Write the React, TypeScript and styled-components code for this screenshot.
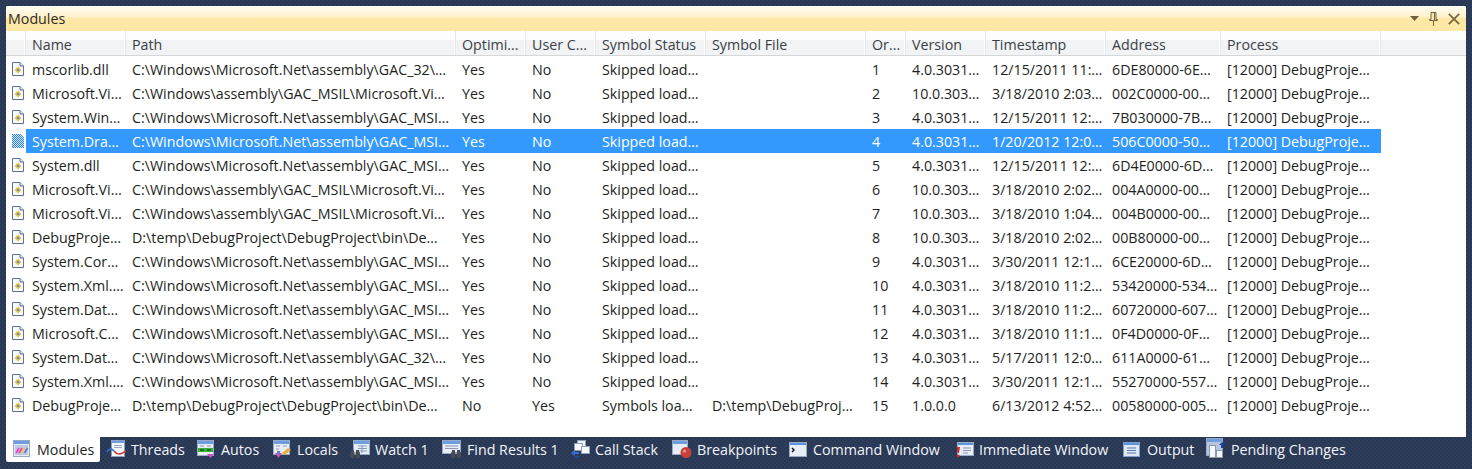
import React from "react";
import styled, { createGlobalStyle } from "styled-components";

const GlobalStyle = createGlobalStyle`
  html, body {
    margin: 0;
    height: 100%;
    overflow: hidden;
  }
  body {
    background-color: #293955;
    background-image: repeating-conic-gradient(#2d3d5a 0 25%, #283753 0 50%);
    background-size: 4px 4px;
    font-family: "Open Sans", "Noto Sans", sans-serif;
    font-size: 14.25px;
  }
`;

const COLUMNS = "20px 100px 330px 70px 70px 110px 160px 40px 80px 120px 115px 160px";

const headers = ["Name", "Path", "Optimi...", "User C...", "Symbol Status", "Symbol File", "Or...", "Version", "Timestamp", "Address", "Process"];

const WIN_NET = "C:\\Windows\\Microsoft.Net\\assembly\\";
const MSIL = WIN_NET + "GAC_MSI…";
const G32 = WIN_NET + "GAC_32\\…";
const VS = "C:\\Windows\\assembly\\GAC_MSIL\\Microsoft.Vi…";
const PROJ = "D:\\temp\\DebugProject\\DebugProject\\bin\\De…";

const rows = [
  ["mscorlib.dll", G32, "4.0.3031…", "12/15/2011 11:…", "6DE80000-6E…"],
  ["Microsoft.Vi…", VS, "10.0.303…", "3/18/2010 2:03…", "002C0000-00…"],
  ["System.Win…", MSIL, "4.0.3031…", "12/15/2011 12:…", "7B030000-7B…"],
  ["System.Dra…", MSIL, "4.0.3031…", "1/20/2012 12:0…", "506C0000-50…"],
  ["System.dll", MSIL, "4.0.3031…", "12/15/2011 12:…", "6D4E0000-6D…"],
  ["Microsoft.Vi…", VS, "10.0.303…", "3/18/2010 2:02…", "004A0000-00…"],
  ["Microsoft.Vi…", VS, "10.0.303…", "3/18/2010 1:04…", "004B0000-00…"],
  ["DebugProje…", PROJ, "10.0.303…", "3/18/2010 2:02…", "00B80000-00…"],
  ["System.Cor…", MSIL, "4.0.3031…", "3/30/2011 12:1…", "6CE20000-6D…"],
  ["System.Xml.…", MSIL, "4.0.3031…", "3/18/2010 11:2…", "53420000-534…"],
  ["System.Dat…", MSIL, "4.0.3031…", "3/18/2010 11:2…", "60720000-607…"],
  ["Microsoft.C…", MSIL, "4.0.3031…", "3/18/2010 11:1…", "0F4D0000-0F…"],
  ["System.Dat…", G32, "4.0.3031…", "5/17/2011 12:0…", "611A0000-61…"],
  ["System.Xml.…", MSIL, "4.0.3031…", "3/30/2011 12:1…", "55270000-557…"],
  ["DebugProje…", PROJ, "1.0.0.0", "6/13/2012 4:52…", "00580000-005…"],
];

const WindowBase = ({ x = 0, y = 0, w = 17, h = 15 }: { x?: number; y?: number; w?: number; h?: number }) => (
  <>
    <rect x={x + 0.5} y={y + 0.5} width={w - 1} height={h - 1} fill="#e6edf7" stroke="#98aac6" />
    <rect x={x + 1} y={y + 1} width={w - 2} height={3} fill="#6f9ee0" />
  </>
);

const Binoculars = ({ x, y }: { x: number; y: number }) => (
  <g transform={`translate(${x} ${y})`} fill="#454c58">
    <rect x="1" y="0" width="3" height="3" />
    <rect x="6" y="0" width="3" height="3" />
    <rect x="0" y="2" width="4.5" height="6" rx="1" />
    <rect x="5.5" y="2" width="4.5" height="6" rx="1" />
    <rect x="4" y="2" width="2" height="2" fill="#9aa1ac" />
  </g>
);

const tabIcons: Record<string, React.ReactNode> = {
  Modules: (
    <>
      <WindowBase h={17} />
      <rect x="2" y="5" width="13" height="10" fill="#bccbe2" />
      <path d="M3 13l3-5M6 13l3-5" stroke="#e64fc0" strokeWidth="2" />
      <path d="M8.5 13l3-5" stroke="#f2c83c" strokeWidth="2" />
      <path d="M11.5 13l3-5" stroke="#6a7ce6" strokeWidth="2" />
    </>
  ),
  Threads: (
    <>
      <rect x="4.5" y="0.5" width="13" height="16" fill="#f3f6fb" stroke="#8fa1bc" />
      <rect x="5" y="1" width="12" height="2" fill="#6f9ee0" />
      <path d="M7 5.5h8M7 7.5h8" stroke="#9aaac2" />
      <path d="M0 12c3-5 5-3 7-1" fill="none" stroke="#2f6fd0" strokeWidth="1.6" />
      <path d="M7 11c3 4 6 4 12 0" fill="none" stroke="#cf3a3a" strokeWidth="1.6" />
    </>
  ),
  Autos: (
    <>
      <WindowBase h={16} />
      <path d="M3 6h4M10 6h4" stroke="#8a9cb8" />
      <rect x="1" y="8" width="15" height="4" fill="#35b52f" />
      <rect x="3" y="9.5" width="4" height="1" fill="#123" />
      <rect x="10" y="9.5" width="4" height="1" fill="#123" />
      <path d="M10 14h7l-3.5 4z" fill="#d050c0" />
    </>
  ),
  Locals: (
    <>
      <WindowBase h={15} />
      <path d="M3 6h4M10 6h4M3 9h3" stroke="#8a9cb8" />
      <path d="M9 13l6-5 3 2-6 5z" fill="#eab23a" />
      <path d="M2 13h7l-3.5 5z" fill="#d050c0" />
      <path d="M4 11h3v3H4z" fill="#6580c0" />
    </>
  ),
  "Watch 1": (
    <>
      <WindowBase x={3} w={17} h={15} />
      <path d="M8 6h9M8 8.5h9M8 11h9M12 5v8" stroke="#8a9cb8" />
      <Binoculars x={0} y={10} />
    </>
  ),
  "Find Results 1": (
    <>
      <rect x="0.5" y="0.5" width="18" height="13" fill="#e6edf7" stroke="#98aac6" />
      <rect x="1" y="1" width="17" height="3" fill="#6f9ee0" />
      <path d="M3 6h13M3 8.5h13" stroke="#8a97ad" />
      <Binoculars x={9} y={10} />
    </>
  ),
  "Call Stack": (
    <>
      <rect x="7.5" y="0.5" width="8" height="6" fill="#eef3fa" stroke="#8fa1bc" />
      <rect x="4.5" y="3.5" width="8" height="7" fill="#f6f8fc" stroke="#8fa1bc" />
      <rect x="11.5" y="6.5" width="8" height="7" fill="#f6f8fc" stroke="#8fa1bc" />
      <path d="M1 13l4-3v2h4v2H5v2z" fill="#2f6fd0" />
      <path d="M4 16l3 2 3-2z" fill="#1f4fa8" />
    </>
  ),
  Breakpoints: (
    <>
      <WindowBase w={16} h={15} />
      <circle cx="14" cy="12.5" r="5.5" fill="#c9403a" />
      <circle cx="12.5" cy="11" r="1.6" fill="#ea9c90" />
    </>
  ),
  "Command Window": (
    <>
      <rect x="0.5" y="2.5" width="17" height="14" fill="#e6edf7" stroke="#98aac6" />
      <rect x="1" y="3" width="16" height="2" fill="#5f92dc" />
      <path d="M3 8l2 2-2 2" fill="none" stroke="#111" strokeWidth="1.4" />
    </>
  ),
  "Immediate Window": (
    <>
      <rect x="2.5" y="2.5" width="16" height="13" fill="#e6edf7" stroke="#98aac6" />
      <rect x="3" y="3" width="15" height="2" fill="#5f92dc" />
      <path d="M8 8h8M8 10.5h8M8 13h5" stroke="#8a97ad" />
      <path d="M1.5 7h3.5l-1 6H2.5z" fill="#d02a2a" />
      <circle cx="3.2" cy="16" r="1.4" fill="#d02a2a" />
    </>
  ),
  Output: (
    <>
      <rect x="0.5" y="2.5" width="16" height="14" fill="#dfe8f5" stroke="#7d9fd0" />
      <rect x="1" y="3" width="15" height="2" fill="#5f92dc" />
      <path d="M4 8h9M4 10.5h9M4 13h9" stroke="#5a7aa9" />
    </>
  ),
  "Pending Changes": (
    <>
      <rect x="0.5" y="-1.5" width="16" height="17" fill="#b7c6dc" stroke="#98aac6" />
      <rect x="1" y="-1" width="15" height="3" fill="#6f9ee0" />
      <rect x="3.5" y="5.5" width="6" height="12" fill="#f3f6fb" stroke="#8a97ad" />
      <rect x="10.5" y="10.5" width="6" height="7" fill="#f3f6fb" stroke="#8a97ad" />
      <path d="M16 2l3 3h-2v3h-2V5h-2z" fill="#1c3fa8" />
    </>
  ),
};

const tabs: { label: string; width: number; iconWidth: number }[] = [
  { label: "Modules", width: 94, iconWidth: 19 },
  { label: "Threads", width: 90, iconWidth: 19 },
  { label: "Autos", width: 76, iconWidth: 19 },
  { label: "Locals", width: 77, iconWidth: 19 },
  { label: "Watch 1", width: 92, iconWidth: 20 },
  { label: "Find Results 1", width: 128, iconWidth: 20 },
  { label: "Call Stack", width: 102, iconWidth: 20 },
  { label: "Breakpoints", width: 117, iconWidth: 20 },
  { label: "Command Window", width: 166, iconWidth: 19 },
  { label: "Immediate Window", width: 168, iconWidth: 19 },
  { label: "Output", width: 83, iconWidth: 19 },
  { label: "Pending Changes", width: 150, iconWidth: 20 },
];

const ModuleIcon = ({ selected }: { selected: boolean }) => (
  <svg width="12" height="14" viewBox="0 0 12 14">
    <defs>
      <pattern id="dither" width="2" height="2" patternUnits="userSpaceOnUse">
        <rect width="2" height="2" fill="#d2e8ff" />
        <rect width="1" height="1" fill="#2f80e0" />
        <rect x="1" y="1" width="1" height="1" fill="#2f80e0" />
      </pattern>
    </defs>
    <path d="M0.5 0.5H8L11.5 4V13.5H0.5Z" fill="#f7f9fc" stroke="#5d7391" />
    <path d="M8 0.5V4H11.5" fill="#dde4ee" stroke="#5d7391" />
    <path d="M6 4.5L9.5 8L6 11.5L2.5 8Z" fill="#e9c23f" />
    <path d="M6 6.5L7.5 8L6 9.5L4.5 8Z" fill="#5f86c9" />
    {selected && <path d="M0 0H8.5L12 3.5V14H0Z" fill="url(#dither)" />}
  </svg>
);

export default function App() {
  return (
    <>
      <GlobalStyle />
      <Page>
        <Panel>
          <TitleBar>
            <TitleText>Modules</TitleText>
            <TitleButtons>
              <svg width="9" height="5" viewBox="0 0 9 5">
                <path d="M0 0H9L4.5 5Z" fill="#6f6040" />
              </svg>
              <svg width="9" height="14" viewBox="0 0 9 14">
                <path d="M2 0.5H7V7.5H8.5V8.5H0.5V7.5H2Z" fill="#f7e6b4" stroke="#75663f" />
                <path d="M4.5 9V14" stroke="#75663f" />
                <path d="M5.5 1V8" stroke="#75663f" />
              </svg>
              <svg width="12" height="12" viewBox="0 0 12 12">
                <path d="M0.8 0.8L11.2 11.2M11.2 0.8L0.8 11.2" stroke="#75663f" strokeWidth="1.7" />
              </svg>
            </TitleButtons>
          </TitleBar>
          <HeaderRow>
            <HeaderCell />
            {headers.map((h) => (
              <HeaderCell key={h}>{h}</HeaderCell>
            ))}
            <HeaderFill />
          </HeaderRow>
          <Rows>
            {rows.map((r, i) => {
              const selected = i === 3;
              const last = i === rows.length - 1;
              return (
                <Row key={i}>
                  <IconCell>
                    <ModuleIcon selected={selected} />
                  </IconCell>
                  <Cell $selected={selected}>{r[0]}</Cell>
                  <Cell $selected={selected}>{r[1]}</Cell>
                  <Cell $selected={selected}>{last ? "No" : "Yes"}</Cell>
                  <Cell $selected={selected}>{last ? "Yes" : "No"}</Cell>
                  <Cell $selected={selected}>{last ? "Symbols loa…" : "Skipped load…"}</Cell>
                  <Cell $selected={selected}>{last ? "D:\\temp\\DebugProj…" : ""}</Cell>
                  <Cell $selected={selected}>{i + 1}</Cell>
                  <Cell $selected={selected}>{r[2]}</Cell>
                  <Cell $selected={selected}>{r[3]}</Cell>
                  <Cell $selected={selected}>{r[4]}</Cell>
                  <Cell $selected={selected}>[12000] DebugProje…</Cell>
                </Row>
              );
            })}
          </Rows>
        </Panel>
        <TabStrip>
          {tabs.map((t, i) => (
            <Tab key={t.label} $active={i === 0} $width={t.width}>
              <TabIcon width={t.iconWidth} height="19" viewBox={`0 0 ${t.iconWidth} 19`}>
                {tabIcons[t.label]}
              </TabIcon>
              {t.label}
            </Tab>
          ))}
        </TabStrip>
      </Page>
    </>
  );
}

const Page = styled.div`
  padding: 6px 6px 0;
  display: flex;
  flex-direction: column;
`;

const Panel = styled.div`
  height: 431px;
  background: #ffffff;
  border-radius: 2px 2px 0 0;
  display: flex;
  flex-direction: column;
`;

const TitleBar = styled.div`
  height: 25px;
  flex: none;
  display: flex;
  align-items: center;
  justify-content: space-between;
  padding: 0 6px 0 2px;
  border-radius: 2px 2px 0 0;
  background: linear-gradient(#fffdf4 0%, #fff3d0 40%, #ffe8a6 52%, #ffe8a6 100%);
`;

const TitleText = styled.div`
  color: #2b2b2b;
`;

const TitleButtons = styled.div`
  display: flex;
  align-items: center;
  gap: 10px;
`;

const HeaderRow = styled.div`
  height: 25px;
  flex: none;
  display: grid;
  grid-template-columns: ${COLUMNS} 1fr;
  box-sizing: border-box;
  border-bottom: 1px solid #d5d6d8;
  background: linear-gradient(#fdfdfd 0%, #fdfdfd 36%, #f2f3f5 37%, #f2f3f5 100%);
`;

const HeaderCell = styled.div`
  padding-left: 6px;
  line-height: 28px;
  color: #3a3f47;
  white-space: nowrap;
  overflow: hidden;
  border-right: 1px solid #e4e6e9;
  box-shadow: inset -1px 0 0 #ffffff;
`;

const HeaderFill = styled.div``;

const Rows = styled.div`
  padding-top: 1px;
`;

const Row = styled.div`
  display: grid;
  grid-template-columns: ${COLUMNS};
  width: max-content;
  height: 24px;
`;

const IconCell = styled.div`
  display: flex;
  justify-content: flex-start;
  align-items: flex-start;
  padding: 5px 0 0 6px;
`;

const Cell = styled.div<{ $selected: boolean }>`
  padding-left: 6px;
  line-height: 26px;
  height: 24px;
  white-space: nowrap;
  overflow: hidden;
  color: ${(p) => (p.$selected ? "#ffffff" : "#1d1f22")};
  background: ${(p) => (p.$selected ? "#3399ff" : "transparent")};
`;

const TabStrip = styled.div`
  display: flex;
  height: 25px;
`;

const Tab = styled.div<{ $active: boolean; $width: number }>`
  flex: none;
  box-sizing: border-box;
  width: ${(p) => p.$width}px;
  padding-left: 7px;
  display: flex;
  align-items: center;
  gap: 5px;
  white-space: nowrap;
  color: ${(p) => (p.$active ? "#1a1d22" : "#f2f5fa")};
  background: ${(p) => (p.$active ? "#ffffff" : "transparent")};
  border-radius: 0 0 2px 2px;
`;

const TabIcon = styled.svg`
  flex: none;
  overflow: visible;
`;
